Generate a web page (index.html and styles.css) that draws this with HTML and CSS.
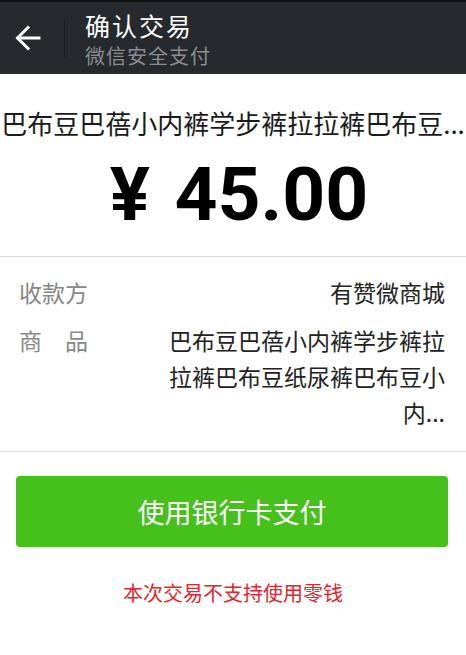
FILE: index.html
```html
<!DOCTYPE html>
<html lang="zh-CN">
<head>
  <meta charset="UTF-8">
  <meta name="viewport" content="width=device-width, initial-scale=1.0">
  <title>确认交易</title>
  <link rel="stylesheet" href="styles.css">
</head>
<body>
  <div class="topbar">
    <div class="back">
      <svg width="26" height="26" viewBox="0 0 26 26">
        <path d="M24 13H3M13 2.5L2.5 13 13 23.5" fill="none" stroke="#fff" stroke-width="3" stroke-linecap="square"/>
      </svg>
    </div>
    <div class="divider"></div>
    <div class="titles">
      <div class="title">确认交易</div>
      <div class="subtitle">微信安全支付</div>
    </div>
  </div>

  <div class="summary">
    <div class="goods-name">巴布豆巴蓓小内裤学步裤拉拉裤巴布豆...</div>
    <div class="price"><span class="currency">¥</span> 45.00</div>
  </div>

  <div class="info">
    <div class="row">
      <div class="label">收款方</div>
      <div class="value">有赞微商城</div>
    </div>
    <div class="row">
      <div class="label">商　品</div>
      <div class="value goods">巴布豆巴蓓小内裤学步裤拉拉裤巴布豆纸尿裤巴布豆小内...</div>
    </div>
  </div>

  <button class="btn">使用银行卡支付</button>
  <p class="note">本次交易不支持使用零钱</p>
</body>
</html>
```

FILE: styles.css
```css
body {
  margin: 0;
  background: #fff;
  font-family: "Noto Sans CJK SC", "Noto Sans", sans-serif;
  color: #1a1a1a;
}
.topbar {
  height: 72px;
  background: #26292e;
  border-top: 2px solid #101112;
  display: flex;
  align-items: center;
}
.back {
  width: 64px;
  display: flex;
  justify-content: center;
  padding-right: 8px;
  box-sizing: border-box;
}
.back svg {
  display: block;
}
.divider {
  width: 1px;
  height: 37px;
  background: #17191c;
}
.titles {
  margin-left: 20px;
  padding-top: 2px;
}
.title {
  color: #fff;
  font-size: 25px;
  line-height: 32px;
  letter-spacing: 2px;
}
.subtitle {
  color: #8b8d90;
  font-size: 20px;
  line-height: 29px;
  letter-spacing: 1px;
}
.summary {
  padding: 31px 0 22px;
  text-align: center;
  border-bottom: 1px solid #dcdcdc;
}
.goods-name {
  font-size: 26px;
  line-height: 36px;
  white-space: nowrap;
  overflow: hidden;
}
.price {
  margin-top: 13px;
  padding-left: 12px;
  font-family: Roboto, "Liberation Sans", sans-serif;
  font-weight: bold;
  font-size: 75px;
  line-height: 80px;
  color: #000;
}
.currency {
  margin-right: 6px;
}
.info {
  padding: 17px 21px 21px 19px;
  border-bottom: 1px solid #dcdcdc;
  display: flex;
  flex-direction: column;
  gap: 12px;
}
.row {
  display: flex;
  justify-content: space-between;
  font-size: 23px;
  line-height: 36px;
}
.label {
  color: #888;
  flex-shrink: 0;
}
.value {
  color: #222;
  text-align: right;
}
.value.goods {
  width: 12.05em;
}
.btn {
  display: block;
  width: 432px;
  height: 71px;
  margin: 24px 0 0 16px;
  border: none;
  border-radius: 4px;
  background: #46c01b;
  color: #fff;
  font-family: "Noto Sans CJK SC", sans-serif;
  font-size: 27px;
  cursor: pointer;
}
.note {
  margin: 32px 0 0;
  text-align: center;
  color: #e1262c;
  font-size: 20px;
  line-height: 28px;
}
```
